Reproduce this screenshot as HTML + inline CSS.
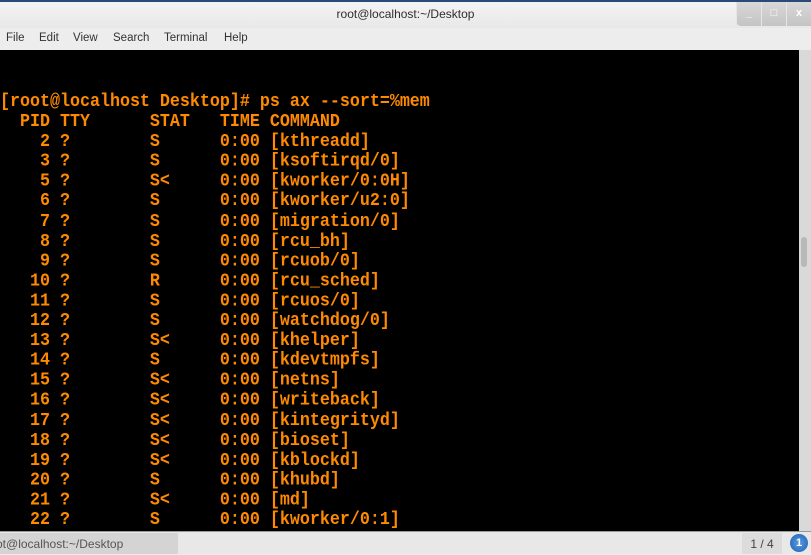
<!DOCTYPE html>
<html><head><meta charset="utf-8"><style>
body{margin:0;width:811px;height:553px;overflow:hidden;background:#ededed;font-family:"Liberation Sans","DejaVu Sans",sans-serif;position:relative}
.title{position:absolute;left:0;top:0;width:811px;height:28px;background:linear-gradient(#f4f4f4,#e8e8e8);border-top:2px solid #2a4a7a;box-sizing:border-box}
.title .t{position:absolute;left:0;width:811px;top:5px;text-align:center;font-size:12px;color:#2e2e2e}
.btns{position:absolute;right:0;top:0;width:75px;height:24px;background:linear-gradient(#d8d8d8,#c4c4c4);border-radius:0 0 0 5px;display:flex;color:#fff;font-size:11px;font-weight:bold}
.btns div{flex:1;text-align:center;line-height:22px;border-left:1px solid #e6e6e6}
.menu{position:absolute;top:28px;left:0;height:22px;width:811px;font-size:11.5px;color:#333}
.menu span{position:absolute;top:4px}
.term{position:absolute;left:0;top:50px;width:799px;height:481px;background:#000;overflow:hidden}
.sb{position:absolute;left:799px;top:50px;width:12px;height:481px;background:#d9d9d9}
.thumb{position:absolute;left:801px;top:237px;width:6px;height:30px;background:#b8b8b8;border-radius:3px}
pre{position:absolute;left:0;top:43px;margin:0;font-family:"Liberation Mono","DejaVu Sans Mono",monospace;font-weight:bold;font-size:16.67px;line-height:18.09px;color:#ff8a00;transform:scaleY(1.1);transform-origin:0 0}
.task{position:absolute;left:0;top:531px;width:811px;height:22px;background:#e8e8e8;border-top:1px solid #999}
.tb{position:absolute;left:0;top:1px;width:178px;height:21px;background:#d4d4d4;font-size:12px;color:#555;line-height:22px;text-indent:-4px}
.pg{position:absolute;left:742px;top:1px;width:40px;height:21px;background:#dcdcdc;font-size:12px;color:#444;line-height:22px;text-align:center}
.ic{position:absolute;left:790px;top:534px;width:18px;height:18px;border-radius:50%;background:radial-gradient(#5a9be0,#1d5fb0);color:#fff;font-size:11px;font-weight:bold;text-align:center;line-height:18px}
</style></head><body>
<div class="title"><div class="t">root@localhost:~/Desktop</div><div class="btns"><div>_</div><div>□</div><div>x</div></div></div>
<div class="menu"><span style="left:6px">File</span><span style="left:39px">Edit</span><span style="left:73px">View</span><span style="left:113px">Search</span><span style="left:164px">Terminal</span><span style="left:224px">Help</span></div>
<div class="term"><pre>[root@localhost Desktop]# ps ax --sort=%mem
  PID TTY      STAT   TIME COMMAND
    2 ?        S      0:00 [kthreadd]
    3 ?        S      0:00 [ksoftirqd/0]
    5 ?        S&lt;     0:00 [kworker/0:0H]
    6 ?        S      0:00 [kworker/u2:0]
    7 ?        S      0:00 [migration/0]
    8 ?        S      0:00 [rcu_bh]
    9 ?        S      0:00 [rcuob/0]
   10 ?        R      0:00 [rcu_sched]
   11 ?        S      0:00 [rcuos/0]
   12 ?        S      0:00 [watchdog/0]
   13 ?        S&lt;     0:00 [khelper]
   14 ?        S      0:00 [kdevtmpfs]
   15 ?        S&lt;     0:00 [netns]
   16 ?        S&lt;     0:00 [writeback]
   17 ?        S&lt;     0:00 [kintegrityd]
   18 ?        S&lt;     0:00 [bioset]
   19 ?        S&lt;     0:00 [kblockd]
   20 ?        S      0:00 [khubd]
   21 ?        S&lt;     0:00 [md]
   22 ?        S      0:00 [kworker/0:1]</pre></div>
<div class="sb"></div><div class="thumb"></div>
<div class="task"><div class="tb">ot@localhost:~/Desktop</div><div class="pg">1 / 4</div></div>
<div class="ic">1</div>
</body></html>
